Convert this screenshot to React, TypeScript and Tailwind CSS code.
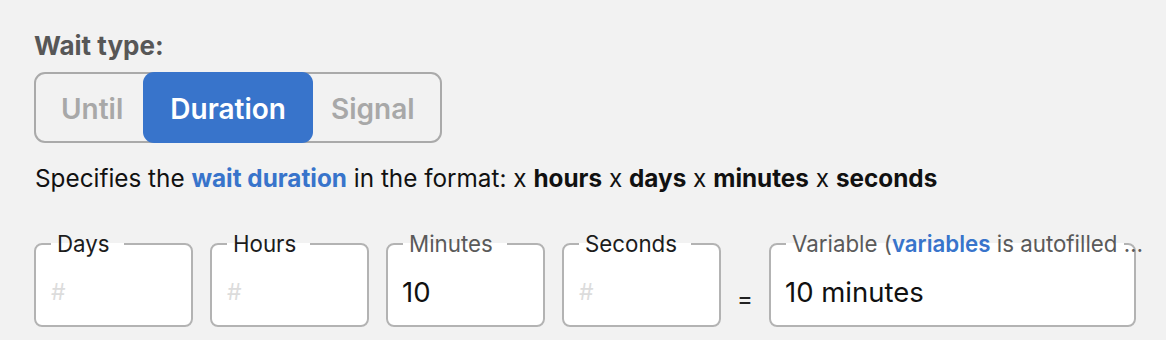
import React from "react";

const font = { fontFamily: "Inter, 'Noto Sans', sans-serif" };

function Field({
  label,
  value,
  placeholder,
  filled,
  wide,
}: {
  label: React.ReactNode;
  value?: string;
  placeholder?: string;
  filled?: boolean;
  wide?: boolean;
}) {
  return (
    <fieldset
      className={`m-0 h-[95px] shrink-0 rounded-[8px] border-2 border-[#b3b3b3] bg-white pb-0 pl-[14px] pr-[10px] pt-0 ${
        wide ? "w-[366px]" : "w-[159px]"
      }`}
    >
      <legend
        className={`ml-[1px] h-[24px] whitespace-nowrap pl-[6px] pr-[14px] text-[22.3px] leading-[24px] ${
          filled ? "text-[#5a5a5a]" : "text-[#1c1c1c]"
        } ${wide ? "w-[338px] pr-0" : ""}`}
      >
        {label}
      </legend>
      <div className="flex h-[62px] items-center pt-[10px]">
        {value ? (
          <span className="text-[27.5px] leading-[32px] text-[#111]">
            {value}
          </span>
        ) : (
          <span className="pl-[1px] text-[23px] leading-[32px] text-[#dcdcdc]">
            {placeholder}
          </span>
        )}
      </div>
    </fieldset>
  );
}

export default function App() {
  return (
    <div
      className="h-[340px] w-[1166px] overflow-hidden bg-[#f2f2f2] pl-[34px] pt-[30px]"
      style={font}
    >
      <div className="text-[26px] font-bold leading-[32px] text-[#575757]">
        Wait type:
      </div>
      <div className="mt-[10px] flex h-[71px] w-fit rounded-[11px] border-2 border-[#aaaaaa]">
        <div className="flex items-center pl-[25px] pr-[20px] pt-[3px] text-[28px] font-semibold text-[#a8a8a8]">
          Until
        </div>
        <div className="-my-[2px] flex items-center rounded-[11px] bg-[#3874cb] px-[27px] pt-[3px] text-[28px] font-semibold text-white">
          Duration
        </div>
        <div className="flex items-center pl-[18px] pr-[25px] pt-[3px] text-[28px] font-semibold text-[#a8a8a8]">
          Signal
        </div>
      </div>
      <div className="mt-[20px] whitespace-nowrap pl-[1px] text-[24.3px] leading-[30px] text-[#111]">
        Specifies the{" "}
        <span className="font-bold text-[#3874cb]">wait duration</span> in the
        format: x <span className="font-bold">hours</span> x{" "}
        <span className="font-bold">days</span> x{" "}
        <span className="font-bold">minutes</span> x{" "}
        <span className="font-bold">seconds</span>
      </div>
      <div className="mt-[39px] flex items-start gap-[17px]">
        <Field label="Days" placeholder="#" />
        <Field label="Hours" placeholder="#" />
        <Field label="Minutes" value="10" filled />
        <Field label="Seconds" placeholder="#" />
        <div className="flex h-[95px] w-[14px] shrink-0 items-center justify-center pt-[38px] text-[24px] text-[#222]">
          =
        </div>
        <Field
          wide
          filled
          value="10 minutes"
          label={
            <span className="block whitespace-nowrap">
              Variable (
              <span className="font-semibold text-[#3874cb]">variables</span>{" "}
              is autofilled …
            </span>
          }
        />
      </div>
    </div>
  );
}
